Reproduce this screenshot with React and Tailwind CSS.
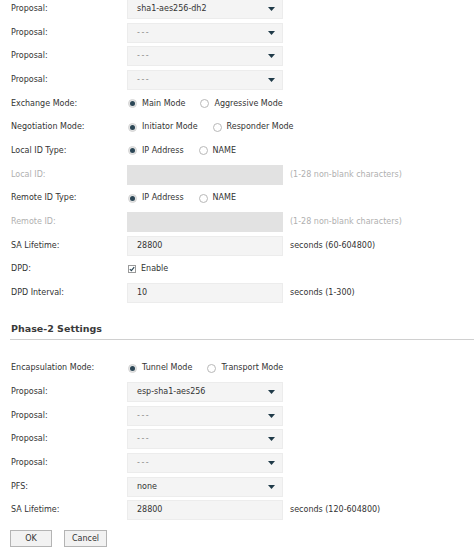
import React from "react";

const font = { fontFamily: '"DejaVu Sans", Verdana, sans-serif' };

function Arrow() {
  return (
    <svg width="7" height="4" viewBox="0 0 7 4" className="block">
      <polygon points="0,0 7,0 3.5,4" fill="#1f3a48" />
    </svg>
  );
}

function Row({ label, disabled, children }) {
  return (
    <div className="flex items-center h-[23.7px]">
      <div className={`w-[127px] pl-[11px] shrink-0 ${disabled ? "text-[#b0b0b0]" : "text-[#333]"}`}>{label}</div>
      {children}
    </div>
  );
}

function Select({ value, muted }) {
  return (
    <div className="w-[156px] h-[20px] bg-[#f4f4f4] border border-[#ececec] flex items-center justify-between pl-[9px] pr-[7px]">
      <span className={muted ? "text-[#888] tracking-[1.5px]" : "text-[#333]"}>{value}</span>
      <Arrow />
    </div>
  );
}

function Input({ value, disabled, hint, hintMuted }) {
  return (
    <div className="flex items-center">
      <div className={`w-[156px] h-[20px] border flex items-center pl-[9px] ${disabled ? "bg-[#e2e2e2] border-[#e2e2e2]" : "bg-[#f4f4f4] border-[#ececec]"}`}>
        <span className="text-[#333]">{value}</span>
      </div>
      {hint && <span className={`ml-[7px] ${hintMuted ? "text-[#b0b0b0]" : "text-[#333]"}`}>{hint}</span>}
    </div>
  );
}

function Radio({ checked, label }) {
  return (
    <div className="flex items-center mr-[14px]">
      {checked ? (
        <span className="w-[9px] h-[9px] rounded-full bg-[#e4e4e4] border border-[#d6d6d6] flex items-center justify-center ml-[1px]">
          <span className="w-[5px] h-[5px] rounded-full bg-[#2c4756]" />
        </span>
      ) : (
        <span className="w-[9px] h-[9px] rounded-full bg-white border border-[#b8b8b8] ml-[1px]" />
      )}
      <span className="ml-[5px] text-[#333]">{label}</span>
    </div>
  );
}

function Radios({ a, b }) {
  return (
    <div className="flex items-center">
      <Radio checked label={a} />
      <Radio label={b} />
    </div>
  );
}

export default function App() {
  return (
    <div className="w-[474px] h-[553px] overflow-hidden bg-white text-[8px] leading-none" style={font}>
      <div className="-mt-[3px]">
        <Row label="Proposal:"><Select value="sha1-aes256-dh2" /></Row>
        <Row label="Proposal:"><Select value="---" muted /></Row>
        <Row label="Proposal:"><Select value="---" muted /></Row>
        <Row label="Proposal:"><Select value="---" muted /></Row>
        <Row label="Exchange Mode:"><Radios a="Main Mode" b="Aggressive Mode" /></Row>
        <Row label="Negotiation Mode:"><Radios a="Initiator Mode" b="Responder Mode" /></Row>
        <Row label="Local ID Type:"><Radios a="IP Address" b="NAME" /></Row>
        <Row label="Local ID:" disabled><Input disabled hint="(1-28 non-blank characters)" hintMuted /></Row>
        <Row label="Remote ID Type:"><Radios a="IP Address" b="NAME" /></Row>
        <Row label="Remote ID:" disabled><Input disabled hint="(1-28 non-blank characters)" hintMuted /></Row>
        <Row label="SA Lifetime:"><Input value="28800" hint="seconds (60-604800)" /></Row>
        <Row label="DPD:">
          <div className="flex items-center">
            <span className="w-[8px] h-[8px] border border-[#9a9a9a] bg-white flex items-center justify-center ml-[1px]">
              <svg width="6" height="6" viewBox="0 0 6 6" className="block">
                <path d="M0.8 3.1 L2.4 4.6 L5.2 1.2" fill="none" stroke="#2c4756" strokeWidth="1.2" />
              </svg>
            </span>
            <span className="ml-[5px] text-[#333]">Enable</span>
          </div>
        </Row>
        <Row label="DPD Interval:"><Input value="10" hint="seconds (1-300)" /></Row>

        <div className="mt-[19px] ml-[10px] border-b border-[#d0d0d0] pb-[6px]">
          <div className="pl-[1px] text-[9.5px] font-bold text-[#3a3a3a] leading-none">Phase-2 Settings</div>
        </div>

        <div className="mt-[16px]">
          <Row label="Encapsulation Mode:"><Radios a="Tunnel Mode" b="Transport Mode" /></Row>
          <Row label="Proposal:"><Select value="esp-sha1-aes256" /></Row>
          <Row label="Proposal:"><Select value="---" muted /></Row>
          <Row label="Proposal:"><Select value="---" muted /></Row>
          <Row label="Proposal:"><Select value="---" muted /></Row>
          <Row label="PFS:"><Select value="none" /></Row>
          <Row label="SA Lifetime:"><Input value="28800" hint="seconds (120-604800)" /></Row>
        </div>

        <div className="flex items-center gap-[12px] pl-[10px] mt-[8px]">
          <button className="w-[42px] h-[17px] bg-[#f2f2f2] border border-[#b4b4b4] text-[#333] text-[8px] leading-none" style={font}>OK</button>
          <button className="w-[43px] h-[17px] bg-[#f2f2f2] border border-[#b4b4b4] text-[#333] text-[8px] leading-none" style={font}>Cancel</button>
        </div>
      </div>
    </div>
  );
}
